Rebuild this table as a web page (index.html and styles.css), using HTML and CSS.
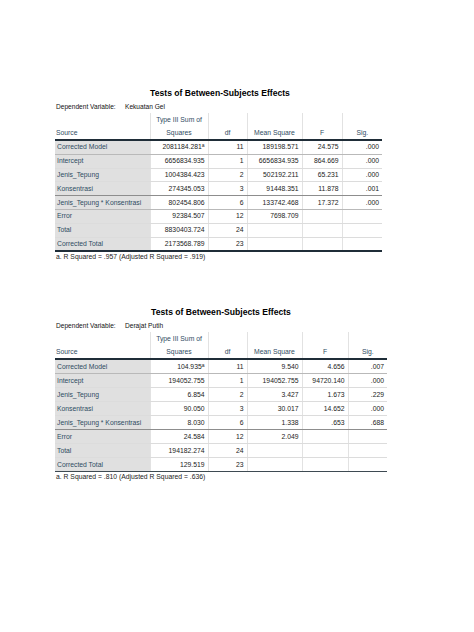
FILE: index.html
```html
<!DOCTYPE html>
<html>
<head>
<meta charset="utf-8">
<link rel="stylesheet" href="styles.css">
</head>
<body>
<div class="page">
  <section class="block first">
    <h2 class="title">Tests of Between-Subjects Effects</h2>
    <div class="depvar"><span class="dv-label">Dependent Variable:</span><span>Kekuatan Gel</span></div>
    <table class="spss t1">
      <colgroup>
        <col class="c-src"><col class="c-ss"><col class="c-df"><col class="c-ms"><col class="c-f1"><col class="c-sig1">
      </colgroup>
      <thead>
        <tr class="h1"><th></th><th class="ctr">Type III Sum of</th><th></th><th></th><th></th><th></th></tr>
        <tr class="h2"><th class="left">Source</th><th class="ctr">Squares</th><th class="ctr">df</th><th class="ctr">Mean Square</th><th class="ctr">F</th><th class="ctr">Sig.</th></tr>
      </thead>
      <tbody>
        <tr class="mid"><td class="src">Corrected Model</td><td>2081184.281<sup>a</sup></td><td>11</td><td>189198.571</td><td>24.575</td><td>.000</td></tr>
        <tr><td class="src">Intercept</td><td>6656834.935</td><td>1</td><td>6656834.935</td><td>864.669</td><td>.000</td></tr>
        <tr><td class="src">Jenis_Tepung</td><td>1004384.423</td><td>2</td><td>502192.211</td><td>65.231</td><td>.000</td></tr>
        <tr class="dark"><td class="src">Konsentrasi</td><td>274345.053</td><td>3</td><td>91448.351</td><td>11.878</td><td>.001</td></tr>
        <tr class="mid"><td class="src">Jenis_Tepung * Konsentrasi</td><td>802454.806</td><td>6</td><td>133742.468</td><td>17.372</td><td>.000</td></tr>
        <tr><td class="src">Error</td><td>92384.507</td><td>12</td><td>7698.709</td><td></td><td></td></tr>
        <tr><td class="src">Total</td><td>8830403.724</td><td>24</td><td></td><td></td><td></td></tr>
        <tr class="last"><td class="src">Corrected Total</td><td>2173568.789</td><td>23</td><td></td><td></td><td></td></tr>
      </tbody>
    </table>
    <p class="note">a. R Squared = .957 (Adjusted R Squared = .919)</p>
  </section>

  <section class="block second">
    <h2 class="title">Tests of Between-Subjects Effects</h2>
    <div class="depvar"><span class="dv-label">Dependent Variable:</span><span>Derajat Putih</span></div>
    <table class="spss t2">
      <colgroup>
        <col class="c-src"><col class="c-ss"><col class="c-df"><col class="c-ms"><col class="c-f2"><col class="c-sig2">
      </colgroup>
      <thead>
        <tr class="h1"><th></th><th class="ctr">Type III Sum of</th><th></th><th></th><th></th><th></th></tr>
        <tr class="h2"><th class="left">Source</th><th class="ctr">Squares</th><th class="ctr">df</th><th class="ctr">Mean Square</th><th class="ctr">F</th><th class="ctr">Sig.</th></tr>
      </thead>
      <tbody>
        <tr class="mid"><td class="src">Corrected Model</td><td>104.935<sup>a</sup></td><td>11</td><td>9.540</td><td>4.656</td><td>.007</td></tr>
        <tr><td class="src">Intercept</td><td>194052.755</td><td>1</td><td>194052.755</td><td>94720.140</td><td>.000</td></tr>
        <tr><td class="src">Jenis_Tepung</td><td>6.854</td><td>2</td><td>3.427</td><td>1.673</td><td>.229</td></tr>
        <tr><td class="src">Konsentrasi</td><td>90.050</td><td>3</td><td>30.017</td><td>14.652</td><td>.000</td></tr>
        <tr class="dark"><td class="src">Jenis_Tepung * Konsentrasi</td><td>8.030</td><td>6</td><td>1.338</td><td>.653</td><td>.688</td></tr>
        <tr><td class="src">Error</td><td>24.584</td><td>12</td><td>2.049</td><td></td><td></td></tr>
        <tr><td class="src">Total</td><td>194182.274</td><td>24</td><td></td><td></td><td></td></tr>
        <tr class="last thin"><td class="src">Corrected Total</td><td>129.519</td><td>23</td><td></td><td></td><td></td></tr>
      </tbody>
    </table>
    <p class="note">a. R Squared = .810 (Adjusted R Squared = .636)</p>
  </section>
</div>
</body>
</html>
```

FILE: styles.css
```css
html, body {
  margin: 0;
  padding: 0;
  background: #ffffff;
}

.page {
  width: 474px;
  height: 632px;
  font-family: "Liberation Sans", Arial, sans-serif;
  color: #111;
  padding-left: 55px;
  box-sizing: border-box;
}

.block {
  display: flex;
  flex-direction: column;
  align-items: flex-start;
}

.block.first { padding-top: 87px; }
.block.second { padding-top: 44px; }

.title {
  margin: 0;
  font-size: 8.6px;
  font-weight: bold;
  line-height: 12px;
  color: #000;
  text-align: center;
  width: 330px;
}

.second .title { width: 332px; }

.depvar {
  margin-top: 3px;
  font-size: 6.6px;
  line-height: 10px;
  color: #111;
  padding-left: 1px;
}

.dv-label {
  display: inline-block;
  width: 69px;
}

.spss {
  margin-top: 1px;
  border-collapse: collapse;
  table-layout: fixed;
  font-size: 6.8px;
}

.c-src { width: 95px; }
.c-ss { width: 58px; }
.c-df { width: 39px; }
.c-ms { width: 55px; }
.c-f1 { width: 40px; }
.c-sig1 { width: 40px; }
.c-f2 { width: 46px; }
.c-sig2 { width: 39px; }

.spss th {
  font-weight: normal;
  color: #2f4c63;
  padding: 0 2px;
  height: 13px;
  line-height: 12px;
  border-left: 1px solid #e2e2e2;
  white-space: nowrap;
}

.spss th:first-child { border-left: none; }

.spss .h1 th { vertical-align: bottom; }
.spss .h2 th {
  border-bottom: 2px solid #1f2d38;
  vertical-align: middle;
}

.spss th.left { text-align: left; padding-left: 1px; }
.spss th.ctr { text-align: center; }

.spss td {
  height: 12.8px;
  padding: 0 3px 0 2px;
  line-height: 12px;
  text-align: right;
  color: #222;
  border-bottom: 1px solid #dcdcdc;
  border-left: 1px solid #e2e2e2;
  white-space: nowrap;
}

.t2 td { height: 13px; }

.spss td.src {
  text-align: left;
  background: #e0e0e0;
  color: #2f4c63;
  border-left: none;
  padding-left: 2px;
}

.spss tr.mid td { border-bottom-color: #b9b9b9; }
.spss tr.dark td { border-bottom-color: #8d8d8d; }
.spss tr.last td { border-bottom: 2px solid #1f2d38; }
.spss tr.last.thin td { border-bottom: 1px solid #3e4a52; }

.spss sup {
  font-size: 5px;
  line-height: 0;
  vertical-align: 2px;
}

.note {
  margin: 0 0 0 1px;
  font-size: 6.8px;
  line-height: 10px;
  color: #222;
}
```
